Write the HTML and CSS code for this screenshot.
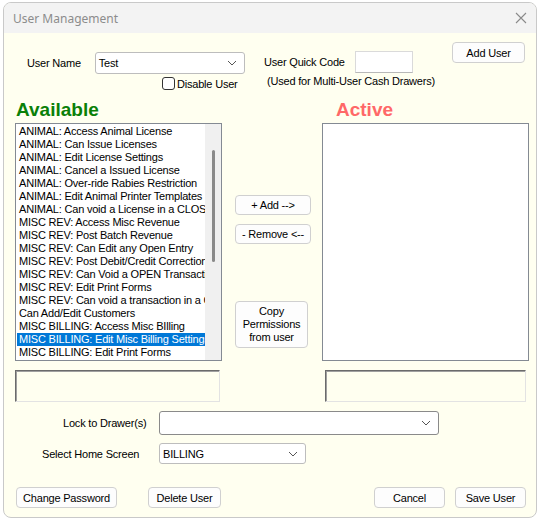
FILE: index.html
```html
<!DOCTYPE html>
<html lang="en">
<head>
    <meta charset="UTF-8">
    <title>User Management</title>
    <link rel="stylesheet" href="styles.css">
</head>
<body>
    <div class="window">
        <div class="titlebar">
            <span class="title">User Management</span>
            <svg class="close" width="12" height="12" viewBox="0 0 12 12">
                <path d="M1 1 L11 11 M11 1 L1 11" stroke="#8a8a8a" stroke-width="1.1" fill="none"/>
            </svg>
        </div>

        <div class="content">
            <div class="top">
                <div class="col-user">
                    <div class="row">
                        <label class="lbl-user">User Name</label>
                        <div class="combo combo-user">
                            <span>Test</span>
                            <svg class="chev" width="10" height="6" viewBox="0 0 10 6"><path d="M1 1 L5 5 L9 1" stroke="#555" fill="none"/></svg>
                        </div>
                    </div>
                    <div class="disable">
                        <span class="checkbox"></span>
                        <span>Disable User</span>
                    </div>
                </div>
                <div class="col-code">
                    <div class="row">
                        <label class="lbl-code">User Quick Code</label>
                        <div class="textbox"></div>
                    </div>
                    <div class="note">(Used for Multi-User Cash Drawers)</div>
                </div>
                <button class="btn btn-adduser">Add User</button>
            </div>

            <div class="lists">
                <div class="col-avail">
                    <h2 class="heading avail">Available</h2>
                    <div class="listbox">
                        <ul class="items">
                            <li>ANIMAL: Access Animal License</li>
                            <li>ANIMAL: Can Issue Licenses</li>
                            <li>ANIMAL: Edit License Settings</li>
                            <li>ANIMAL: Cancel a Issued License</li>
                            <li>ANIMAL: Over-ride Rabies Restriction</li>
                            <li>ANIMAL: Edit Animal Printer Templates</li>
                            <li>ANIMAL: Can void a License in a CLOSED Period</li>
                            <li>MISC REV: Access Misc Revenue</li>
                            <li>MISC REV: Post Batch Revenue</li>
                            <li>MISC REV: Can Edit any Open Entry</li>
                            <li>MISC REV: Post Debit/Credit Corrections</li>
                            <li>MISC REV: Can Void a OPEN Transaction</li>
                            <li>MISC REV: Edit Print Forms</li>
                            <li>MISC REV: Can void a transaction in a CLOSED Period</li>
                            <li>Can Add/Edit Customers</li>
                            <li>MISC BILLING: Access Misc BIlling</li>
                            <li class="selected">MISC BILLING: Edit Misc Billing Settings</li>
                            <li>MISC BILLING: Edit Print Forms</li>
                        </ul>
                        <div class="scrolltrack"><div class="thumb"></div></div>
                    </div>
                    <div class="infobox infobox-left"></div>
                </div>

                <div class="col-mid">
                    <button class="btn btn-move">+ Add --&gt;</button>
                    <button class="btn btn-move btn-remove">- Remove &lt;--</button>
                    <button class="btn btn-copy">Copy<br>Permissions<br>from user</button>
                </div>

                <div class="col-active">
                    <h2 class="heading active">Active</h2>
                    <div class="listbox listbox-active"></div>
                    <div class="infobox infobox-right"></div>
                </div>
            </div>

            <div class="form-row lock">
                <label class="lbl-lock">Lock to Drawer(s)</label>
                <div class="combo combo-lock">
                    <span></span>
                    <svg class="chev" width="10" height="6" viewBox="0 0 10 6"><path d="M1 1 L5 5 L9 1" stroke="#555" fill="none"/></svg>
                </div>
            </div>
            <div class="form-row home">
                <label class="lbl-home">Select Home Screen</label>
                <div class="combo combo-home">
                    <span>BILLING</span>
                    <svg class="chev" width="10" height="6" viewBox="0 0 10 6"><path d="M1 1 L5 5 L9 1" stroke="#555" fill="none"/></svg>
                </div>
            </div>

            <div class="actions">
                <button class="btn btn-pass">Change Password</button>
                <button class="btn btn-delete">Delete User</button>
                <button class="btn btn-cancel">Cancel</button>
                <button class="btn btn-save">Save User</button>
            </div>
        </div>
    </div>
</body>
</html>
```

FILE: styles.css
```css
body {
    margin: 0;
    background: #ffffff;
    font-family: "Liberation Sans", Arial, sans-serif;
    font-size: 11px;
    letter-spacing: -0.2px;
    color: #000000;
}
.window {
    margin: 2px 0 0 3px;
    width: 532px;
    height: 514px;
    border: 1px solid #c9c9c9;
    border-radius: 8px;
    overflow: hidden;
    background: #fffff0;
    display: flex;
    flex-direction: column;
}
.titlebar {
    height: 30px;
    background: #f3f3f3;
    display: flex;
    align-items: center;
    justify-content: space-between;
    padding: 0 9px 0 9px;
    flex-shrink: 0;
}
.title {
    font-family: "Noto Sans", "Open Sans", sans-serif;
    font-size: 12px;
    letter-spacing: 0;
    color: #8c8c8c;
}
.close {
    margin-top: -1px;
}
.content {
    padding: 9px 0 0 11px;
}

/* top area */
.top {
    display: flex;
    height: 56px;
}
.row {
    display: flex;
    align-items: center;
}
.col-user {
    margin: 10px 0 0 12px;
    width: 218px;
}
.lbl-user {
    width: 68px;
}
.combo {
    background: #ffffff;
    border: 1px solid #bdbdbd;
    border-radius: 3px;
    box-sizing: border-box;
    display: flex;
    align-items: center;
    justify-content: space-between;
    padding: 0 7px 0 3px;
}
.combo-user {
    width: 151px;
    height: 22px;
}
.disable {
    display: flex;
    align-items: center;
    margin: 3px 0 0 135px;
    gap: 2px;
    white-space: nowrap;
}
.checkbox {
    width: 11px;
    height: 11px;
    flex-shrink: 0;
    border: 1px solid #333333;
    border-radius: 3px;
    background: #ffffff;
}
.col-code {
    margin: 9px 0 0 19px;
    width: 149px;
}
.lbl-code {
    width: 91px;
    flex-shrink: 0;
    white-space: nowrap;
}
.textbox {
    width: 58px;
    height: 22px;
    flex-shrink: 0;
    background: #ffffff;
    border: 1px solid #dadada;
    border-bottom-color: #b8b8b8;
    box-sizing: border-box;
}
.note {
    margin: 2px 0 0 3px;
    white-space: nowrap;
}
.btn {
    font-family: "Liberation Sans", Arial, sans-serif;
    font-size: 11px;
    letter-spacing: -0.2px;
    color: #000000;
    background: #fdfdfd;
    border: 1px solid #d0d0d0;
    border-radius: 4px;
    padding: 0;
    box-sizing: border-box;
}
.btn-adduser {
    width: 73px;
    height: 21px;
    margin-left: 39px;
}

/* lists */
.lists {
    display: flex;
    margin-top: 1px;
}
.heading {
    margin: 0;
    height: 24px;
    line-height: 22px;
    font-family: "Liberation Sans", Arial, sans-serif;
    font-size: 19px;
    font-weight: bold;
    letter-spacing: 0;
}
.avail {
    color: #0a8008;
    padding-left: 1px;
}
.active {
    color: #ff6868;
    padding-left: 14px;
}
.listbox {
    width: 207px;
    height: 238px;
    border: 1px solid #848a93;
    background: #ffffff;
    box-sizing: border-box;
    display: flex;
}
.items {
    list-style: none;
    margin: 1px 0 0 0;
    padding: 0 0 0 1px;
    flex: 1;
    overflow: hidden;
}
.items li {
    height: 13px;
    line-height: 13px;
    padding-left: 2px;
    white-space: nowrap;
    overflow: hidden;
}
.items li.selected {
    background: #0078d7;
    color: #ffffff;
}
.scrolltrack {
    width: 16px;
    background: #f0f0f0;
    display: flex;
    justify-content: center;
}
.thumb {
    width: 3px;
    height: 112px;
    margin-top: 26px;
    background: #8a8a8a;
    border-radius: 2px;
}
.infobox {
    height: 32px;
    margin-top: 9px;
    box-sizing: border-box;
    border: 1px solid;
    border-color: #6b6b6b #e3e3e3 #e3e3e3 #6b6b6b;
    box-shadow: inset 1px 1px 0 #a0a0a0;
}
.infobox-left {
    width: 205px;
}
.infobox-right {
    width: 201px;
    margin-left: 3px;
}
.col-mid {
    display: flex;
    flex-direction: column;
    margin-left: 13px;
    padding-top: 96px;
}
.btn-move {
    width: 76px;
    height: 20px;
}
.btn-remove {
    margin-top: 9px;
}
.btn-copy {
    width: 73px;
    height: 47px;
    margin-top: 57px;
    line-height: 13px;
}
.col-active {
    margin-left: 11px;
}

/* drawer and home screen */
.form-row {
    display: flex;
    align-items: center;
}
.lock {
    margin-top: 9px;
}
.lbl-lock {
    margin-left: 48px;
    width: 96px;
}
.combo-lock {
    width: 280px;
    height: 24px;
    border-color: #8a8a8a;
}
.home {
    margin-top: 8px;
}
.lbl-home {
    margin-left: 27px;
    width: 117px;
}
.combo-home {
    width: 147px;
    height: 21px;
}

/* bottom buttons */
.actions {
    display: flex;
    margin-top: 23px;
}
.btn-pass {
    width: 101px;
    height: 21px;
    margin-left: 1px;
}
.btn-delete {
    width: 73px;
    height: 21px;
    margin-left: 31px;
}
.btn-cancel {
    width: 71px;
    height: 21px;
    margin-left: 153px;
}
.btn-save {
    width: 71px;
    height: 21px;
    margin-left: 10px;
}
```
